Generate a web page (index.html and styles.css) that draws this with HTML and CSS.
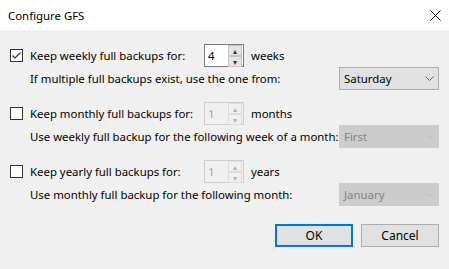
FILE: index.html
```html
<!DOCTYPE html>
<html lang="en">
  <head>
    <meta charset="UTF-8" />
    <title>Configure GFS</title>
    <link rel="stylesheet" href="styles.css">
  </head>
  <body>
    <div class="titlebar">
      <div class="title">Configure GFS</div>
      <svg class="close" width="11" height="11" viewBox="0 0 11 11">
        <path d="M0.5 0.5 L10.5 10.5 M10.5 0.5 L0.5 10.5" stroke="#000" stroke-width="1" fill="none" />
      </svg>
    </div>

    <div class="content">
      <div class="group">
        <div class="main-row">
          <span class="check checked">
            <svg width="11" height="11" viewBox="0 0 11 11">
              <path d="M1.5 5.5 L4 8 L9.5 2.5" stroke="#333" stroke-width="1.2" fill="none" />
            </svg>
          </span>
          <span class="label">Keep weekly full backups for:</span>
          <div class="spin">
            <span class="spin-value">4</span>
            <div class="spin-btns">
              <span class="spin-btn">&#9652;</span>
              <span class="spin-btn">&#9662;</span>
            </div>
          </div>
          <span class="unit">weeks</span>
        </div>
        <div class="sub-row">
          <span class="sub-label">If multiple full backups exist, use the one from:</span>
          <div class="combo">
            <span>Saturday</span>
            <svg width="9" height="5" viewBox="0 0 9 5"><path d="M0.5 0.5 L4.5 4.5 L8.5 0.5" stroke="#606060" fill="none" /></svg>
          </div>
        </div>
      </div>

      <div class="group">
        <div class="main-row">
          <span class="check"></span>
          <span class="label">Keep monthly full backups for:</span>
          <div class="spin disabled">
            <span class="spin-value">1</span>
            <div class="spin-btns">
              <span class="spin-btn">&#9652;</span>
              <span class="spin-btn">&#9662;</span>
            </div>
          </div>
          <span class="unit">months</span>
        </div>
        <div class="sub-row">
          <span class="sub-label">Use weekly full backup for the following week of a month:</span>
          <div class="combo disabled">
            <span>First</span>
            <svg width="9" height="5" viewBox="0 0 9 5"><path d="M0.5 0.5 L4.5 4.5 L8.5 0.5" stroke="#bcbcbc" fill="none" /></svg>
          </div>
        </div>
      </div>

      <div class="group">
        <div class="main-row">
          <span class="check"></span>
          <span class="label">Keep yearly full backups for:</span>
          <div class="spin disabled">
            <span class="spin-value">1</span>
            <div class="spin-btns">
              <span class="spin-btn">&#9652;</span>
              <span class="spin-btn">&#9662;</span>
            </div>
          </div>
          <span class="unit">years</span>
        </div>
        <div class="sub-row">
          <span class="sub-label">Use monthly full backup for the following month:</span>
          <div class="combo disabled">
            <span>January</span>
            <svg width="9" height="5" viewBox="0 0 9 5"><path d="M0.5 0.5 L4.5 4.5 L8.5 0.5" stroke="#bcbcbc" fill="none" /></svg>
          </div>
        </div>
      </div>

      <div class="buttons">
        <button class="btn default">OK</button>
        <button class="btn">Cancel</button>
      </div>
    </div>
  </body>
</html>
```

FILE: styles.css
```css
* {
  margin: 0;
  padding: 0;
  box-sizing: border-box;
}
body {
  width: 449px;
  height: 269px;
  background: #f0f0f0;
  font-family: "Noto Sans", "Open Sans", sans-serif;
  font-size: 11.4px;
  color: #000;
  overflow: hidden;
}
.titlebar {
  height: 30px;
  background: #fff;
  display: flex;
  align-items: center;
  justify-content: space-between;
  padding: 0 8px 0 8px;
}
.content {
  padding: 14px 10px 0 10px;
}
.group {
  margin-bottom: 12px;
}
.main-row {
  height: 23px;
  display: flex;
  align-items: center;
  white-space: nowrap;
}
.check {
  width: 13px;
  height: 13px;
  border: 1px solid #333;
  background: #fff;
  display: flex;
  align-items: center;
  justify-content: center;
  margin-right: 7px;
}
.label {
  width: 174px;
}
.spin {
  width: 40px;
  height: 23px;
  border: 1px solid #7a7a7a;
  background: #fff;
  display: flex;
  align-items: center;
  justify-content: space-between;
  padding: 0 1px 0 3px;
}
.spin.disabled {
  border-color: #cccccc;
  background: #f0f0f0;
  color: #a0a0a0;
}
.spin-btns {
  display: flex;
  flex-direction: column;
  width: 14px;
  height: 21px;
}
.spin-btn {
  flex: 1;
  font-size: 8px;
  line-height: 9px;
  text-align: center;
  background: #e5e5e5;
  border: 1px solid #c4c4c4;
  color: #333;
}
.spin.disabled .spin-btn {
  background: #f0f0f0;
  border-color: #dcdcdc;
  color: #b0b0b0;
}
.unit {
  margin-left: 7px;
}
.sub-row {
  height: 23px;
  display: flex;
  align-items: center;
  justify-content: space-between;
  padding-left: 20px;
  white-space: nowrap;
}
.combo {
  width: 100px;
  height: 23px;
  border: 1px solid #adadad;
  background: #e1e1e1;
  display: flex;
  align-items: center;
  justify-content: space-between;
  padding: 0 4px 0 4px;
}
.combo.disabled {
  border-color: #cccccc;
  background: #cccccc;
  color: #838383;
}
.buttons {
  display: flex;
  justify-content: flex-end;
  gap: 8px;
  margin-top: 18px;
}
.btn {
  width: 78px;
  height: 23px;
  font-family: inherit;
  font-size: 12px;
  background: #e1e1e1;
  border: 1px solid #adadad;
  color: #000;
}
.btn.default {
  border: 2px solid #0078d7;
}
```
